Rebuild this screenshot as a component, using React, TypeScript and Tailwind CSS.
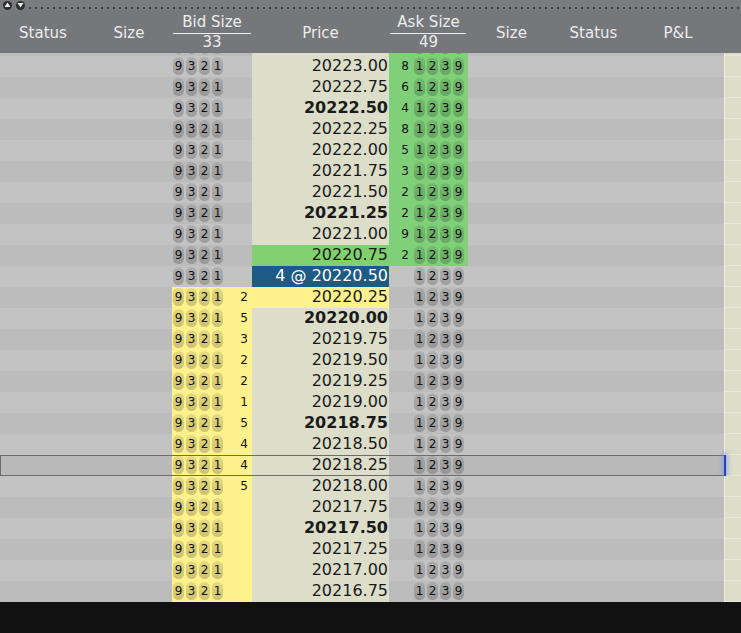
import React from 'react';

const FONT = { fontFamily: '"DejaVu Sans", Verdana, sans-serif' };

const COLS = 'grid grid-cols-[86px_86px_80px_137px_79px_87px_77px_92px_17px]';

const BID_LEVELS = ['9', '3', '2', '1'];
const ASK_LEVELS = ['1', '2', '3', '9'];

const askFirst: Record<string, string> = {
  '20223.00': '8',
  '20222.75': '6',
  '20222.50': '4',
  '20222.25': '8',
  '20222.00': '5',
  '20221.75': '3',
  '20221.50': '2',
  '20221.25': '2',
  '20221.00': '9',
  '20220.75': '2',
};

const bidNum: Record<string, string> = {
  '20220.25': '2',
  '20220.00': '5',
  '20219.75': '3',
  '20219.50': '2',
  '20219.25': '2',
  '20219.00': '1',
  '20218.75': '5',
  '20218.50': '4',
  '20218.25': '4',
  '20218.00': '5',
};

const Bubble: React.FC<{ n: string }> = ({ n }) => (
  <span className="flex h-[18px] w-[11px] items-center justify-center rounded-full bg-gradient-to-b from-black/10 to-black/20 text-[12px] leading-none text-[#111]">
    {n}
  </span>
);

const Row: React.FC<{ price: number; index: number }> = ({ price, index }) => {
  const key = price.toFixed(2);
  const partial = index === 0;
  const light = index % 2 === 1;
  const isAsk = price >= 20220.75;
  const isBidHi = price <= 20220.25;
  const bold = Math.round((price - 20220) * 100) % 125 === 0;
  const selected = key === '20218.25';

  let priceCls = 'bg-[#dcdec9] text-[#1a1a1a]';
  let priceText = partial ? '' : key;
  if (key === '20220.75') priceCls = 'bg-[#80d070] text-[#1a1a1a]';
  if (key === '20220.50') {
    priceCls = 'bg-[#1c5b84] text-white';
    priceText = '4 @ 20220.50';
  }
  if (key === '20220.25') priceCls = 'bg-[#fff28c] text-[#1a1a1a]';

  const base = selected ? 'bg-[#b9b9b9]' : light ? 'bg-[#c3c3c3]' : 'bg-[#bcbcbc]';

  return (
    <div className={`relative h-[21px] ${COLS} ${base}`}>
      <div />
      <div />
      <div className={`flex items-center pl-[1px] pr-[4px] ${isBidHi ? 'bg-[#fff28c]' : ''}`}>
        <div className="flex gap-[2px]">
          {BID_LEVELS.map((d, i) => (
            <Bubble key={i} n={partial ? '' : d} />
          ))}
        </div>
        <span className="ml-auto text-[12px] text-[#111]">{bidNum[key] ?? ''}</span>
      </div>
      <div
        className={`flex items-center justify-end pr-[1px] text-[16px] leading-none ${priceCls} ${bold ? 'font-bold' : ''}`}
      >
        {priceText}
      </div>
      <div className={`flex items-center pr-[4px] ${isAsk ? 'bg-[#80d07a]' : ''}`}>
        <span className="w-[29px] pr-[5px] text-right text-[12px] text-[#111]">{isAsk ? askFirst[key] ?? '' : ''}</span>
        <div className="flex gap-[2px]">
          {ASK_LEVELS.map((d, i) => (
            <Bubble key={i} n={partial ? '' : d} />
          ))}
        </div>
      </div>
      <div />
      <div />
      <div />
      <div className="border-l border-[#ececdc] bg-[#dcdec9] shadow-[inset_0_-1px_0_#e8e9da]" />
      {selected && (
        <>
          <div className="pointer-events-none absolute left-0 top-0 h-[21px] w-[724px] border border-r-0 border-[#6c6c6c]" />
          <div className="absolute left-[724px] top-0 h-[21px] w-[2px] bg-[#2c3fb8] shadow-[0_0_4px_2px_rgba(120,150,230,0.6)]" />
        </>
      )}
    </div>
  );
};

const HeaderSingle: React.FC<{ label: string }> = ({ label }) => (
  <div className="flex items-center justify-center pt-[3px]">{label}</div>
);

const HeaderDouble: React.FC<{ label: string; total: string; cls: string }> = ({ label, total, cls }) => (
  <div className="flex flex-col items-stretch pt-[4px] text-center">
    <span className="leading-[17px]">{label}</span>
    <div className={`mt-[2px] h-px bg-[#eeeeee] ${cls}`} />
    <span className="leading-[17px]">{total}</span>
  </div>
);

const App: React.FC = () => {
  const prices: number[] = [];
  for (let p = 20223.25; p >= 20216.75; p -= 0.25) prices.push(Math.round(p * 100) / 100);

  return (
    <div className="flex h-[633px] w-[741px] flex-col overflow-hidden bg-[#111111]" style={FONT}>
      {/* toolbar */}
      <div className="flex h-[10px] items-center gap-[4px] bg-[#7b7c80] pl-[3px]">
        <span className="flex h-[9px] w-[9px] items-center justify-center rounded-full bg-[#2e2e2e]">
          <svg width="7" height="6" viewBox="0 0 7 6">
            <path d="M3.5 0.5 L6.5 5 L0.5 5 Z" fill="#f2f2f2" />
          </svg>
        </span>
        <span className="flex h-[9px] w-[9px] items-center justify-center rounded-full bg-[#2e2e2e]">
          <svg width="7" height="6" viewBox="0 0 7 6">
            <path d="M0.5 1 L6.5 1 L3.5 5.5 Z" fill="#f2f2f2" />
          </svg>
        </span>
        <div className="mt-[6px] h-[2px] flex-1 bg-[repeating-linear-gradient(90deg,#3e3e3e_0_2px,transparent_2px_6px)]" />
      </div>

      {/* header */}
      <div className={`h-[43px] ${COLS} bg-[#76777b] text-[15px] text-[#ececec]`}>
        <HeaderSingle label="Status" />
        <HeaderSingle label="Size" />
        <HeaderDouble label="Bid Size" total="33" cls="mx-[1px]" />
        <HeaderSingle label="Price" />
        <HeaderDouble label="Ask Size" total="49" cls="ml-[1px] mr-[2px]" />
        <HeaderSingle label="Size" />
        <HeaderSingle label="Status" />
        <HeaderSingle label="P&L" />
        <div />
      </div>

      {/* ladder */}
      <div className="h-[549px] overflow-hidden bg-[#c0c0c0]">
        <div className="-mt-[18.5px]">
          {prices.map((p, i) => (
            <Row key={p} price={p} index={i} />
          ))}
        </div>
      </div>

      <div className="flex-1 bg-[#111111]" />
    </div>
  );
};

export default App;
